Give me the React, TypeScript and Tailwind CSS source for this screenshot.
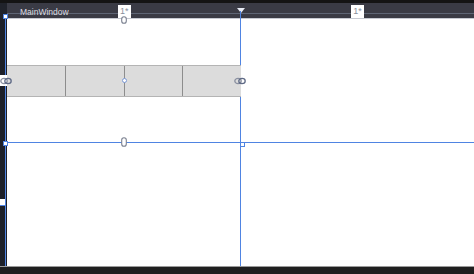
import React from 'react';

const BLUE = 'bg-[#4f84e2]';

const Handle: React.FC<{ className: string }> = ({ className }) => (
  <div className={`absolute w-[5px] h-[5px] bg-white border border-[#4f84e2] ${className}`} />
);

const StarLabel: React.FC = () => (
  <div className="h-[13px] px-[2px] bg-white text-[#8a8f9c] text-[9px] leading-[13px]">1*</div>
);

const Link: React.FC<{ className: string }> = ({ className }) => (
  <svg className={`absolute ${className}`} width="12" height="8" viewBox="0 0 12 8">
    <ellipse cx="4" cy="4" rx="3.2" ry="2.6" fill="none" stroke="#8a90a0" strokeWidth="1.3" />
    <ellipse cx="8" cy="4" rx="3.2" ry="2.6" fill="none" stroke="#5f6a86" strokeWidth="1.3" />
  </svg>
);

const Pill: React.FC<{ h: number }> = ({ h }) => (
  <svg width="6" height={h} viewBox={`0 0 6 ${h}`}>
    <rect x="0.7" y="0.7" width="4.6" height={h - 1.4} rx="2.3" fill="white" stroke="#7b8190" strokeWidth="1.1" />
  </svg>
);

const App: React.FC = () => {
  return (
    <div className="relative w-[474px] h-[274px] bg-[#1c1e24] overflow-hidden flex flex-col font-['Liberation_Sans',sans-serif]">
      <div className="h-[3px] bg-[#141414]" />

      {/* title bar with column ruler */}
      <div className="h-[15px] flex">
        <div className="w-[7px] bg-[#20232b]" />
        <div className="relative flex-1 bg-[#3a3b45] grid grid-cols-[234px_1fr]">
          <div className="absolute left-0 right-0 top-[10px] h-px bg-[#5e6575]" />
          <div className="relative flex items-center pl-[13px] pt-[4px]">
            <span className="text-[8.5px] text-[#dcdde2] leading-none">MainWindow</span>
            <div className="absolute left-[111px] top-[2px]"><StarLabel /></div>
            <div className="absolute right-[-4px] top-[5px] w-0 h-0 border-l-[4px] border-r-[4px] border-t-[5px] border-l-transparent border-r-transparent border-t-[#e8ecf5]" />
          </div>
          <div className="relative flex justify-center pt-[2px]">
            <StarLabel />
          </div>
        </div>
      </div>

      {/* canvas */}
      <div className="flex-1 flex">
        <div className="relative w-[7px] bg-[#1d2029]">
          <div className={`absolute left-[5px] top-0 bottom-0 w-px ${BLUE}`} />
          <Handle className="left-[3px] top-[-4px]" />
          <Handle className="left-[3px] top-[123px]" />
          <div className="absolute left-0 top-[57px] w-[7px] h-[11px] bg-white" />
          <div className="absolute left-0 top-[181px] w-[5px] h-[7px] bg-white border-b border-[#4f84e2]" />
        </div>
        <div className="flex-1 bg-white border-t border-[#c7cad2] grid grid-cols-[234px_1fr] grid-rows-[124px_1fr]">
          <div className="relative border-r border-b border-[#4f84e2] flex flex-col pt-[46px]">
            <div className="w-[234px] h-[32px] flex bg-[#dcdcdc] border-y border-[#b4b4b4]">
              <div className="flex-1 border-r border-[#8d8d8d]" />
              <div className="relative flex-1 border-r border-[#8d8d8d]">
                <div className="absolute right-[-3px] top-[12px] w-[5px] h-[5px] rounded-full bg-white border border-[#7c9ad8]" />
              </div>
              <div className="flex-1 border-r border-[#8d8d8d]" />
              <div className="flex-1" />
            </div>
            <div className="absolute left-[114px] top-[-3px]"><Pill h={8} /></div>
            <div className="absolute left-[114px] bottom-[-5px]"><Pill h={10} /></div>
            <div className={`absolute right-[-1px] top-[-8px] w-px h-[8px] ${BLUE}`} />
            <Link className="left-[-7px] top-[58px]" />
            <Link className="right-[-6px] top-[58px]" />
            <div className="absolute right-[-5px] bottom-[-5px] w-[5px] h-[5px] border border-[#4f84e2]" />
          </div>
          <div className="border-b border-[#4f84e2]" />
          <div className="border-r border-[#4f84e2]" />
          <div />
        </div>
      </div>
      <div className="h-px bg-[#9a9a9a]" />
      <div className="h-[7px] bg-[#1f1f1f]" />
    </div>
  );
};

export default App;
